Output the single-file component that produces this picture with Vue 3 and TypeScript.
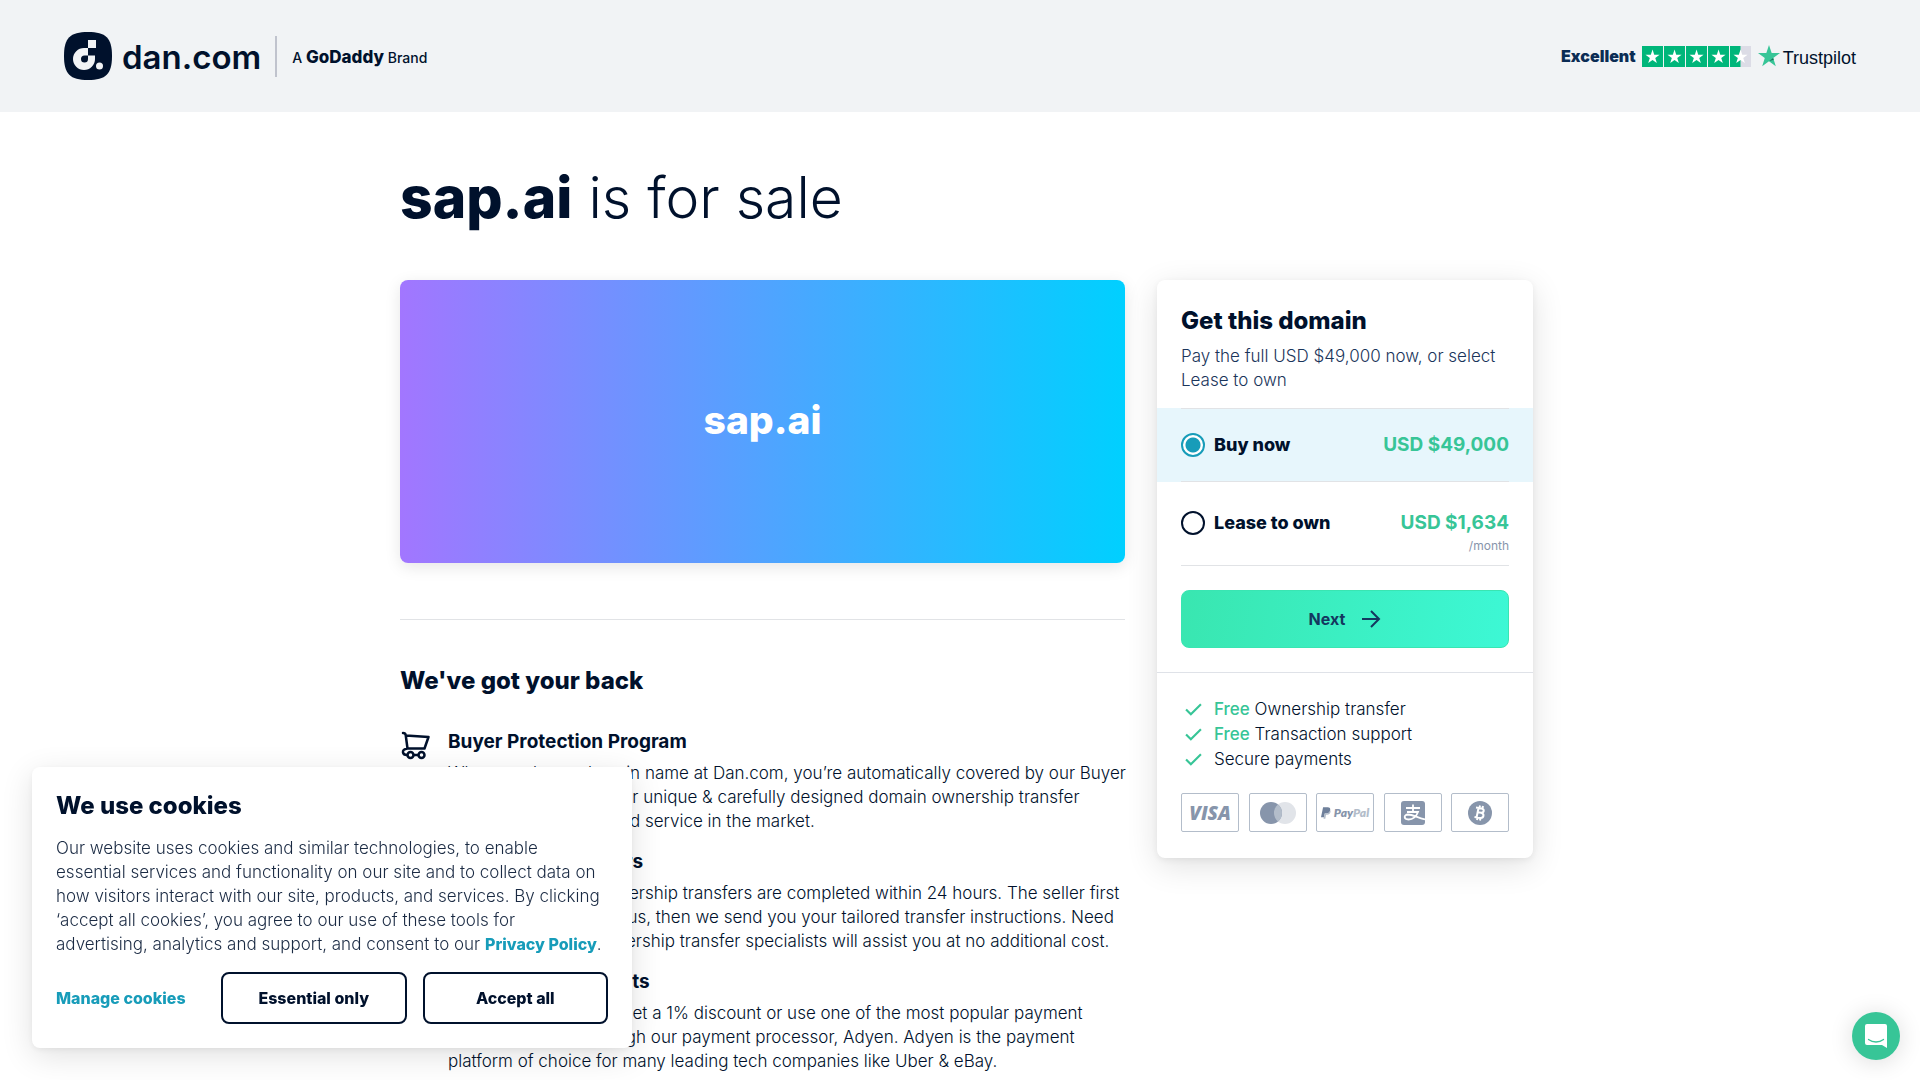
<script setup lang="ts">
import { ref } from 'vue'

interface Benefit {
  title: string
  text: string[]
}

const plan = ref<'buy' | 'lease'>('buy')

const benefits: Benefit[] = [
  {
    title: 'Buyer Protection Program',
    text: [
      'When you buy a domain name at Dan.com, you’re automatically covered by our Buyer',
      'Protection Program. Our unique & carefully designed domain ownership transfer',
      'gives you the best-rated service in the market.',
    ],
  },
  {
    title: 'Fast & easy transfers',
    text: [
      '98% of all domain ownership transfers are completed within 24 hours. The seller first',
      'delivers the domain to us, then we send you your tailored transfer instructions. Need',
      'help? Our domain ownership transfer specialists will assist you at no additional cost.',
    ],
  },
  {
    title: 'Hassle free payments',
    text: [
      'Pay by bank wire and get a 1% discount or use one of the most popular payment',
      'options available through our payment processor, Adyen. Adyen is the payment',
      'platform of choice for many leading tech companies like Uber & eBay.',
    ],
  },
]

const perks = [
  { free: true, label: 'Ownership transfer' },
  { free: true, label: 'Transaction support' },
  { free: false, label: 'Secure payments' },
]

const starFill = [1, 1, 1, 1, 0.5]
const starPath = 'M12 0l2.900 8.800H24l-7.400 5.500 2.800 8.900L12 17.700l-7.400 5.500 2.800-8.900L0 8.800h9.100z'
</script>

<template>
  <div class="page">
    <header class="top">
      <a class="brand" href="#">
        <svg class="mark" viewBox="0 0 48 48" aria-hidden="true">
          <path d="M24 0C42 0 48 6 48 24S42 48 24 48 0 42 0 24 6 0 24 0z" fill="#00112c" />
          <path d="M24 8h8v8h-8z" fill="#f1f3f5" />
          <path fill-rule="evenodd" d="M20 16h4v7.500h-3.500a3.500 3.500 0 1 0 3.500 3.500V23.500h7V27a11 11 0 1 1-11-11z" fill="#f1f3f5" />
          <circle cx="35.500" cy="34" r="3.500" fill="#f1f3f5" />
        </svg>
        <span class="name">dan.com</span>
        <span class="owner">A <b>GoDaddy</b> Brand</span>
      </a>
      <a class="rating" href="#">
        <span class="grade">Excellent</span>
        <span class="stars">
          <svg v-for="(f, i) in starFill" :key="i" viewBox="0 0 24 24" aria-hidden="true">
            <rect width="24" height="24" fill="#dcdce6" />
            <rect :width="24 * f" height="24" fill="#00b67a" />
            <path :d="starPath" fill="#fff" transform="translate(4 4) scale(.67)" />
          </svg>
        </span>
        <span class="pilot">
          <svg viewBox="0 0 24 24" aria-hidden="true">
            <path :d="starPath" fill="#37c597" />
            <path d="M17.200 16.200l-.6-1.900L12 17.700z" fill="#16705a" />
          </svg>
          <span>Trustpilot</span>
        </span>
      </a>
    </header>

    <main class="wrap">
      <h1><b>sap.ai</b> is for sale</h1>
      <div class="cols">
        <section class="left">
          <div class="banner">sap.ai</div>
          <hr />
          <h2>We've got your back</h2>
          <article v-for="(b, i) in benefits" :key="b.title" class="benefit">
            <svg v-if="i === 0" class="cart" viewBox="0 0 32 32" fill="none" stroke="#00112c" stroke-width="2.500" stroke-linecap="round" stroke-linejoin="round" aria-hidden="true">
              <path d="M3 4c2 0 2.500.7 2.700 2L7.500 19.500H24.500l4-11.500L6 6.500M7.500 19.500C4 20 2.600 21.500 3 23.500c.3 1.500 1.500 2.500 4 2.500M14 26h4" />
              <circle cx="10.500" cy="26" r="3" />
              <circle cx="21.500" cy="26" r="3" />
            </svg>
            <h3>{{ b.title }}</h3>
            <p><span v-for="t in b.text" :key="t">{{ t }}</span></p>
          </article>
        </section>

        <form class="card" @submit.prevent>
          <div class="intro">
            <h2>Get this domain</h2>
            <p>Pay the full USD $49,000 now, or select Lease to own</p>
          </div>
          <label class="option" :class="{ on: plan === 'buy' }">
            <span class="row">
              <input v-model="plan" type="radio" name="plan" value="buy" />
              <span class="what">Buy now</span>
              <span class="price">USD $49,000</span>
            </span>
          </label>
          <label class="option lease" :class="{ on: plan === 'lease' }">
            <span class="row">
              <input v-model="plan" type="radio" name="plan" value="lease" />
              <span class="what">Lease to own</span>
              <span class="price">USD $1,634<small>/month</small></span>
            </span>
          </label>
          <div class="action">
            <button type="submit">
              Next
              <svg viewBox="0 0 20 20" fill="none" stroke="#14375f" stroke-width="2" aria-hidden="true"><path d="M1 10h17M10 2l8 8-8 8" /></svg>
            </button>
          </div>
          <div class="extras">
            <ul>
              <li v-for="p in perks" :key="p.label">
                <svg viewBox="0 0 16 12" fill="none" stroke="#37c597" stroke-width="2" aria-hidden="true"><path d="M1 6l4.500 4.500L15 1" /></svg>
                <span><b v-if="p.free">Free</b> {{ p.label }}</span>
              </li>
            </ul>
            <div class="pay">
              <span><i class="visa">VISA</i></span>
              <span>
                <svg viewBox="0 0 36 24" width="36" height="24" role="img" aria-label="Mastercard">
                  <circle cx="25" cy="12" r="11" fill="#e1e4e9" />
                  <circle cx="11" cy="12" r="11" fill="#8795ab" />
                  <path d="M18 3.500a11 11 0 0 1 0 17 11 11 0 0 1 0-17z" fill="#b3bdca" />
                </svg>
              </span>
              <span class="paypal">
                <svg viewBox="0 0 12 14" width="10" height="12" aria-hidden="true">
                  <path d="M2.500 0H8c2.500 0 3.500 1.500 3 3.800C10.500 6.500 8.700 7.500 6.300 7.500H4.500L3.600 12H0z" fill="#6f809b" />
                  <path d="M11.200 3.500c1 3.500-.8 5.500-4 5.500H6l-.8 5H3l1.300-6.500h2c2.500 0 4.400-1 4.900-4z" fill="#b3bdca" />
                </svg>
                <i>Pay<em>Pal</em></i>
              </span>
              <span>
                <svg viewBox="0 0 24 24" width="24" height="24" role="img" aria-label="Alipay">
                  <rect width="24" height="24" rx="3" fill="#8795ab" />
                  <path d="M5 7h14M12 3.500v7M6 11h11c-1.500 4-5 7.500-9.500 7.500-5 0-5-4.800-.5-5 4.500 0 9 3 17 5" fill="none" stroke="#fff" stroke-width="1.800" />
                </svg>
              </span>
              <span>
                <svg viewBox="0 0 24 24" width="24" height="24" fill="none" stroke="#fff" stroke-width="2" role="img" aria-label="Bitcoin">
                  <circle cx="12" cy="12" r="12" fill="#8795ab" stroke="none" />
                  <path d="M8 6.500l5.500 1c3.300.7 2.800 4.300-.5 4.200l-3-.5M10.500 7l-2 9.800M13 11.700c3.800.8 3 5.600-.8 5.200l-5.700-1M12 4.500l-.5 2.300M15 5l-.5 2.300M9.500 16.800L9 19M12.500 17l-.5 2.500" />
                </svg>
              </span>
            </div>
          </div>
        </form>
      </div>
    </main>

    <aside class="cookies">
      <h2>We use cookies</h2>
      <p>
        Our website uses cookies and similar technologies, to enable essential services and functionality on our site
        and to collect data on how visitors interact with our site, products, and services. By clicking ‘accept all
        cookies’, you agree to our use of these tools for advertising, analytics and support, and consent to our
        <a href="#">Privacy Policy</a>.
      </p>
      <div class="choices">
        <a href="#">Manage cookies</a>
        <button type="button">Essential only</button>
        <button type="button">Accept all</button>
      </div>
    </aside>

    <button class="chat" type="button" aria-label="Open chat">
      <svg viewBox="0 0 22 24" aria-hidden="true">
        <path d="M2 0h18a2 2 0 0 1 2 2v22l-5-3H2a2 2 0 0 1-2-2V2a2 2 0 0 1 2-2z" fill="#fff" />
        <path d="M3.500 15.500c4.500 3.300 10.500 3.300 15 0" fill="none" stroke="#37c597" stroke-width="1.300" stroke-linecap="round" />
      </svg>
    </button>
  </div>
</template>

<style>
body {
  margin: 0;
  overflow: hidden;
}
</style>

<style scoped>
.page {
  height: 100vh;
  overflow: hidden;
  background: #fff;
  color: #00112c;
  font: 300 17px/24px Inter, "Liberation Sans", sans-serif;
}
*,
*::before,
*::after {
  box-sizing: border-box;
}
h1,
h2,
h3,
p,
ul {
  margin: 0;
  padding: 0;
}
a {
  color: #179cb9;
  font-weight: 700;
  text-decoration: none;
}
button {
  font: inherit;
  font-size: 16px;
  cursor: pointer;
}
h2 {
  font-size: 24px;
  font-weight: 800;
  line-height: 32px;
}
.top {
  display: flex;
  align-items: center;
  justify-content: space-between;
  height: 112px;
  padding: 0 64px;
  background: #f1f3f5;
}
.brand,
.rating {
  display: flex;
  align-items: center;
  color: #00112c;
}
.mark {
  width: 48px;
  height: 48px;
}
.name {
  margin-left: 10px;
  padding-top: 2px;
  font-size: 33px;
  font-weight: 600;
  line-height: 40px;
}
.owner {
  margin-left: 14px;
  padding: 2px 0 0 15px;
  border-left: 2px solid #c0c3cd;
  font-size: 14px;
  font-weight: 500;
  line-height: 38px;
}
.owner b {
  font-size: 17px;
  font-weight: 800;
}
.grade {
  color: #0b2c54;
  font-size: 16px;
  font-weight: 900;
}
.stars {
  display: flex;
  gap: 1px;
  margin: 0 7px 0 6px;
}
.stars svg {
  width: 21px;
  height: 21px;
}
.pilot {
  display: flex;
  align-items: center;
  gap: 3px;
  font: 400 18px/24px "Liberation Sans", sans-serif;
}
.pilot span {
  padding-top: 4px;
}
.pilot svg {
  width: 22px;
  height: 22px;
}
.wrap {
  max-width: 1146px;
  margin: 0 auto;
  padding: 50px 0 0 13px;
}
h1 {
  font-size: 57px;
  font-weight: 300;
  line-height: 72px;
}
h1 b {
  font-weight: 800;
}
.cols {
  display: flex;
  align-items: flex-start;
  gap: 32px;
  margin-top: 46px;
}
.left {
  flex: 1;
  min-width: 0;
}
.banner {
  display: flex;
  align-items: center;
  justify-content: center;
  height: 283px;
  padding-bottom: 4px;
  border-radius: 8px;
  background: linear-gradient(90deg, #a276ff, #00d0ff);
  box-shadow: 0 4px 16px rgba(0, 0, 0, 0.1);
  color: #fff;
  font-size: 39px;
  font-weight: 800;
}
hr {
  margin: 56px 0 45px;
  border: 0;
  border-top: 1px solid #e1e3e6;
}
.left h2 {
  margin-bottom: 32px;
}
.benefit {
  position: relative;
  padding-left: 48px;
  margin-bottom: 16px;
}
.cart {
  position: absolute;
  top: 0;
  left: 0;
  width: 32px;
  height: 32px;
}
h3 {
  margin-bottom: 7px;
  font-size: 19px;
  font-weight: 700;
  line-height: 25px;
}
.benefit span {
  display: block;
  white-space: nowrap;
}
.card {
  width: 376px;
  overflow: hidden;
  border-radius: 8px;
  background: #fff;
}
.card,
.cookies {
  box-shadow: 0 8px 32px rgba(0, 0, 0, 0.12), 0 2px 6px rgba(0, 0, 0, 0.06);
}
.intro {
  padding: 25px 24px 16px;
}
.intro p {
  margin-top: 7px;
  color: #1a355b;
}
.option {
  display: block;
  padding: 0 24px;
  cursor: pointer;
}
.option.on {
  background: #e7f6fc;
}
.row {
  display: flex;
  align-items: center;
  height: 74px;
  border-top: 1px solid #e1e3e6;
  border-bottom: 1px solid #e1e3e6;
  font-size: 18px;
  font-weight: 800;
}
.lease .row {
  align-items: flex-start;
  height: 84px;
  padding-top: 29px;
  border-top: 0;
}
input {
  width: 24px;
  height: 24px;
  margin: 0 9px 0 0;
  appearance: none;
  border: 2px solid #00112c;
  border-radius: 50%;
  background: #fff;
}
input:checked {
  border-color: #179cb9;
  background: radial-gradient(circle, #179cb9 7px, #fff 8px);
}
.price {
  margin-left: auto;
  color: #37c597;
  font-size: 19px;
  font-weight: 700;
  text-align: right;
}
small {
  display: block;
  color: #8795ab;
  font-size: 12px;
  font-weight: 400;
  line-height: 22px;
}
.action {
  padding: 24px;
  border-bottom: 1px solid #dfe2e8;
}
.action button {
  display: flex;
  align-items: center;
  justify-content: center;
  gap: 16px;
  width: 100%;
  height: 58px;
  border: 1px solid #39e5b2;
  border-radius: 8px;
  background: linear-gradient(100deg, #39e6b0, #3df8d5);
  color: #14375f;
  font-weight: 700;
}
.action svg {
  width: 20px;
  height: 20px;
}
.extras {
  padding: 24px 24px 26px;
}
ul {
  list-style: none;
}
li {
  display: flex;
  align-items: center;
  gap: 12px;
  padding-left: 4px;
  line-height: 25px;
}
li svg {
  width: 17px;
  height: 13px;
}
li b {
  color: #37c597;
  font-weight: 500;
}
.pay {
  display: flex;
  justify-content: space-between;
  margin-top: 21px;
}
.pay > span {
  display: flex;
  align-items: center;
  justify-content: center;
  width: 58px;
  height: 39px;
  border: 1px solid #b3bdca;
  border-radius: 2px;
}
.visa {
  color: #8795ab;
  font: italic 800 19px "Open Sans", sans-serif;
}
.paypal {
  gap: 3px;
  color: #8795ab;
  font: italic 800 12px Lato, sans-serif;
}
.paypal em {
  color: #b3bdca;
}
.cookies {
  position: fixed;
  bottom: 32px;
  left: 32px;
  width: 600px;
  padding: 23px 24px 24px;
  border-radius: 8px;
  background: #fff;
}
.cookies p {
  margin: 14px 0 16px;
  color: #1a2a43;
}
.cookies a {
  font-size: 16px;
  font-weight: 800;
}
.choices {
  display: flex;
  align-items: center;
  gap: 16px;
}
.choices a {
  width: 149px;
}
.choices button {
  flex: 1;
  height: 52px;
  border: 2px solid #00112c;
  border-radius: 8px;
  background: #fff;
  color: #00112c;
  font-weight: 800;
}
.chat {
  position: fixed;
  right: 20px;
  bottom: 20px;
  display: flex;
  align-items: center;
  justify-content: center;
  width: 48px;
  height: 48px;
  padding: 0;
  border: 0;
  border-radius: 50%;
  background: #37c597;
  box-shadow: 0 2px 24px rgba(0, 0, 0, 0.14);
}
.chat svg {
  width: 22px;
  height: 24px;
}
</style>
